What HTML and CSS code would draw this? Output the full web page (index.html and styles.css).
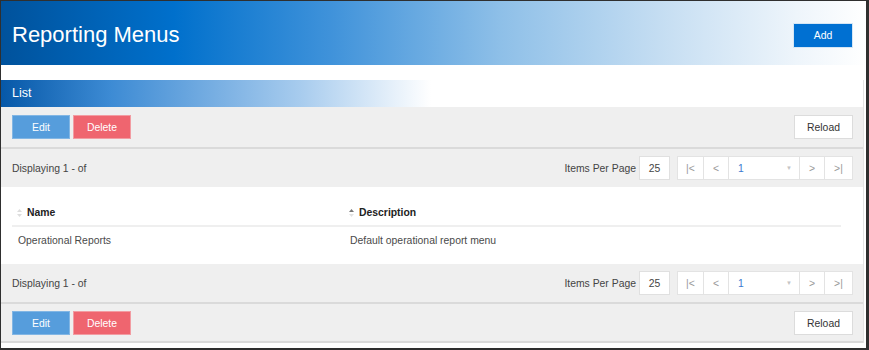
FILE: index.html
```html
<!DOCTYPE html>
<html lang="en">
  <head>
    <meta charset="UTF-8" />
    <meta name="viewport" content="width=device-width,initial-scale=1.0" />
    <title>Reporting Menus</title>
    <link rel="stylesheet" href="styles.css">
  </head>
  <body>
    <div class="frame">
      <div class="page-header">
        <h1>Reporting Menus</h1>
        <button class="btn btn-add">Add</button>
      </div>

      <div class="panel">
        <div class="panel-title">List</div>

        <div class="toolbar">
          <div class="group">
            <button class="btn btn-edit">Edit</button>
            <button class="btn btn-delete">Delete</button>
          </div>
          <button class="btn btn-reload">Reload</button>
        </div>

        <div class="pager-row">
          <span class="count">Displaying 1 - of</span>
          <div class="pager">
            <label class="per-page">Items Per Page <input type="text" value="25" /></label>
            <div class="pages">
              <span class="pg">|&lt;</span>
              <span class="pg">&lt;</span>
              <span class="pg pg-select"><span class="num">1</span><span class="caret">&#9660;</span></span>
              <span class="pg">&gt;</span>
              <span class="pg">&gt;|</span>
            </div>
          </div>
        </div>

        <div class="table-wrap">
          <table>
            <thead>
              <tr>
                <th class="col-name">
                  <svg class="sort" width="5" height="8" viewBox="0 0 5 8"><path d="M2.5 0L5 3H0z" fill="#ddd"/><path d="M2.5 8L5 5H0z" fill="#ddd"/></svg>Name
                </th>
                <th>
                  <svg class="sort" width="5" height="8" viewBox="0 0 5 8"><path d="M2.5 0L5 3H0z" fill="#777"/><path d="M2.5 8L5 5H0z" fill="#e2e2e2"/></svg>Description
                </th>
              </tr>
            </thead>
            <tbody>
              <tr>
                <td>Operational Reports</td>
                <td>Default operational report menu</td>
              </tr>
            </tbody>
          </table>
        </div>

        <div class="pager-row">
          <span class="count">Displaying 1 - of</span>
          <div class="pager">
            <label class="per-page">Items Per Page <input type="text" value="25" /></label>
            <div class="pages">
              <span class="pg">|&lt;</span>
              <span class="pg">&lt;</span>
              <span class="pg pg-select"><span class="num">1</span><span class="caret">&#9660;</span></span>
              <span class="pg">&gt;</span>
              <span class="pg">&gt;|</span>
            </div>
          </div>
        </div>

        <div class="toolbar toolbar-bottom">
          <div class="group">
            <button class="btn btn-edit">Edit</button>
            <button class="btn btn-delete">Delete</button>
          </div>
          <button class="btn btn-reload">Reload</button>
        </div>
      </div>
    </div>
  </body>
</html>
```

FILE: styles.css
```css
body {
  margin: 0;
  background: #fff;
  font-family: "Liberation Sans", Arial, sans-serif;
  font-size: 10.4px;
  color: #444;
}
.frame {
  width: 869px;
  height: 350px;
  box-sizing: border-box;
  border: 1px solid #2f2f2f;
  border-right-width: 3px;
  border-bottom-width: 2px;
  overflow: hidden;
}
.page-header {
  height: 64px;
  display: flex;
  align-items: center;
  justify-content: space-between;
  padding: 0 13px 0 11px;
  background: linear-gradient(
    to right,
    #00529c 0%,
    #0070cc 20%,
    #3f92da 38%,
    #8fc0e8 58%,
    #c4ddf2 76%,
    #eef5fb 92%,
    #fff 100%
  );
}
.page-header h1 {
  margin: 4px 0 0;
  font-size: 22px;
  font-weight: normal;
  color: #fff;
}
.btn {
  font-family: inherit;
  font-size: 10.4px;
  height: 24px;
  width: 59px;
  padding: 0;
  cursor: pointer;
}
.btn-add {
  height: 25px;
  width: 60px;
  margin-top: 5px;
  background: #0070d2;
  color: #fff;
  border: 1px solid #d5e6f5;
}
.panel {
  margin-top: 15px;
  margin-right: 2px;
  border-right: 1px solid #e3e3e3;
}
.panel-title {
  height: 27px;
  line-height: 27px;
  padding-left: 11px;
  color: #fff;
  font-size: 12.5px;
  background: linear-gradient(
    to right,
    #0658a8 0px,
    #3d8bd4 110px,
    #a8ccee 300px,
    #fff 430px
  );
}
.toolbar {
  display: flex;
  justify-content: space-between;
  align-items: center;
  padding: 8px 10px 8px 11px;
  background: #efefef;
  border-bottom: 2px solid #dadada;
}
.toolbar-bottom {
  padding: 7px 10px 6px 11px;
  border-top: 2px solid #dadada;
}
.group {
  display: flex;
  gap: 3px;
}
.btn-edit,
.btn-delete {
  width: 58px;
}
.btn-edit {
  background: #569ddc;
  color: #fff;
  border: 1px solid #82b6e4;
}
.btn-delete {
  background: #ef656f;
  color: #fff;
  border: 1px solid #f29ca2;
}
.btn-reload {
  background: #fff;
  color: #333;
  border: 1px solid #dcdcdc;
}
.pager-row {
  display: flex;
  justify-content: space-between;
  align-items: center;
  height: 38px;
  padding: 0 10px 0 11px;
  background: #efefef;
}
.pager {
  display: flex;
  align-items: center;
  gap: 7px;
}
.per-page {
  display: flex;
  align-items: center;
  gap: 3px;
}
.per-page input {
  width: 31px;
  height: 24px;
  box-sizing: border-box;
  border: 1px solid #e0e0e0;
  text-align: center;
  font-family: inherit;
  font-size: 10.4px;
  color: #444;
  padding: 0;
}
.pages {
  display: flex;
  height: 24px;
  box-sizing: border-box;
  border: 1px solid #e3e3e3;
  background: #fff;
}
.pg {
  display: flex;
  align-items: center;
  justify-content: center;
  width: 24px;
  color: #999;
  border-left: 1px solid #e3e3e3;
}
.pg:first-child {
  border-left: none;
  width: 25px;
}
.pg:last-child {
  width: 27px;
}
.pg-select {
  width: 71px;
  justify-content: space-between;
  padding: 0 7px 0 9px;
  box-sizing: border-box;
}
.pg-select .num {
  color: #3b7ad0;
}
.pg-select .caret {
  font-size: 6px;
  color: #c4c4c4;
}
.table-wrap {
  height: 77px;
  box-sizing: border-box;
  padding: 12px 22px 0 11px;
  background: #fff;
}
table {
  width: 100%;
  border-collapse: collapse;
}
th,
td {
  text-align: left;
  padding: 0 6px;
  height: 26px;
}
th {
  font-weight: bold;
  color: #222;
  border-bottom: 2px solid #efefef;
}
th:first-child,
td:first-child {
  width: 320px;
}
.col-name {
  padding-left: 5px;
}
.sort {
  margin-right: 5px;
  vertical-align: -1px;
}
th:nth-child(2) {
  padding-left: 5px;
}
td {
  color: #4a4a4a;
}
```
